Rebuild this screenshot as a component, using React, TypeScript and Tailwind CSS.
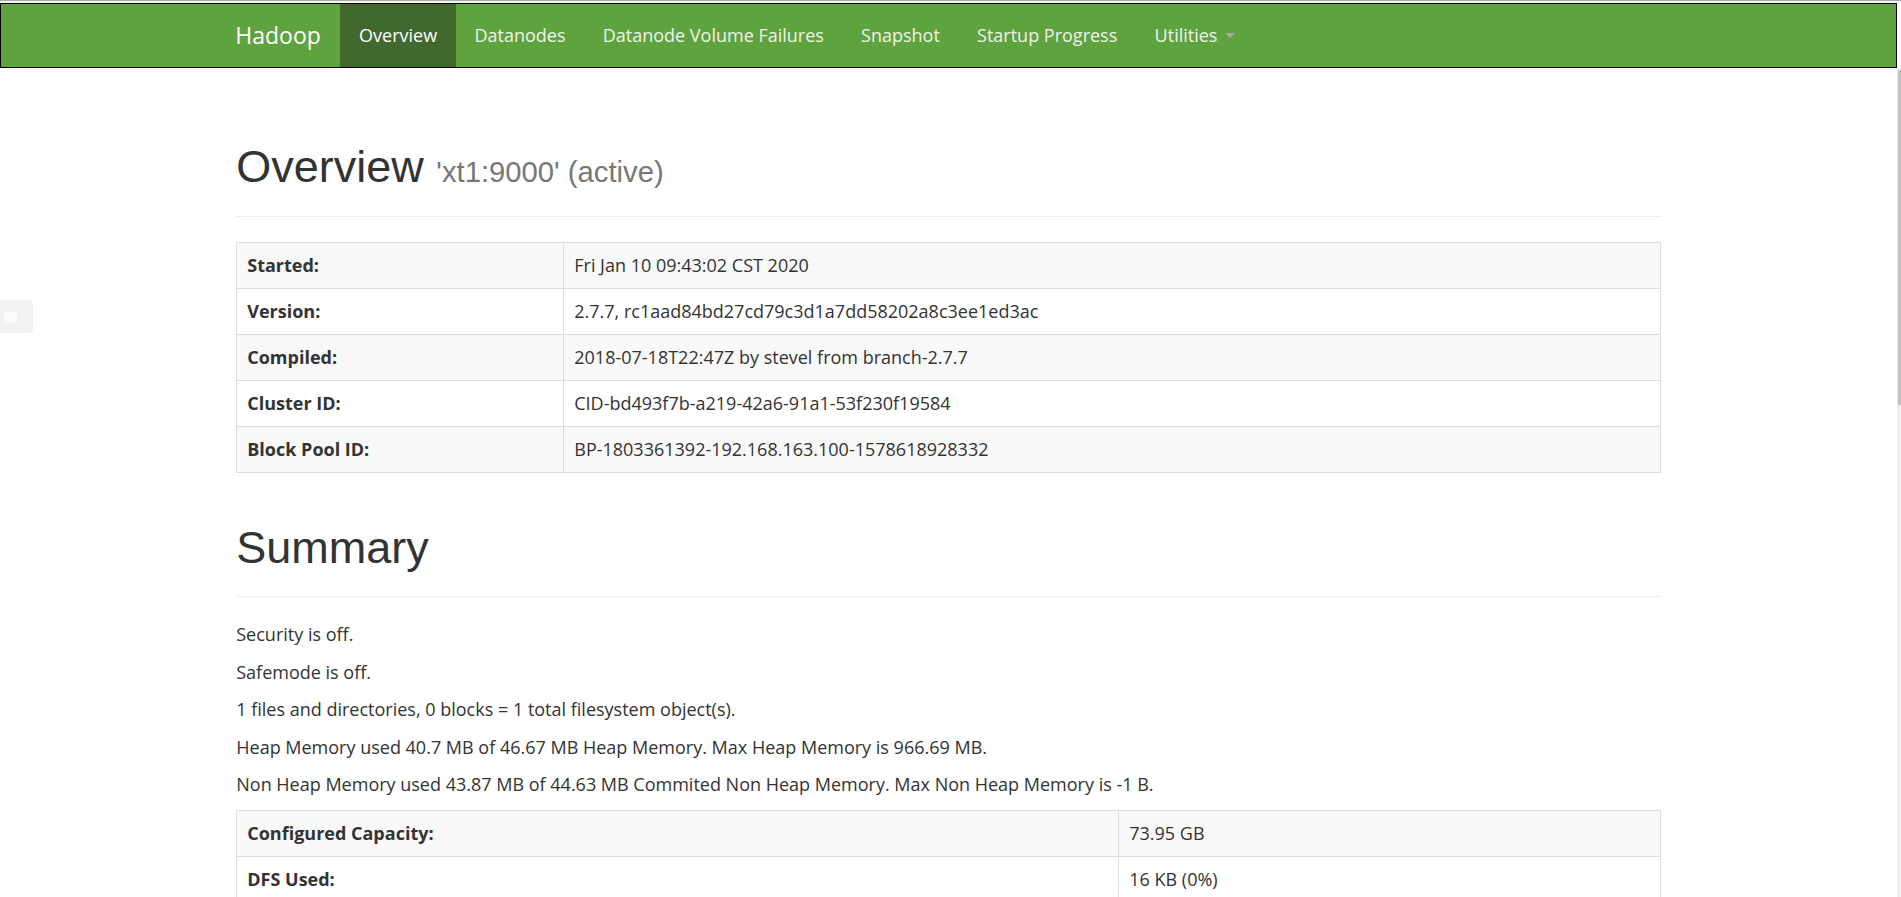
const navItems = ["Overview", "Datanodes", "Datanode Volume Failures", "Snapshot", "Startup Progress"];

const overviewRows = [
  ["Started:", "Fri Jan 10 09:43:02 CST 2020"],
  ["Version:", "2.7.7, rc1aad84bd27cd79c3d1a7dd58202a8c3ee1ed3ac"],
  ["Compiled:", "2018-07-18T22:47Z by stevel from branch-2.7.7"],
  ["Cluster ID:", "CID-bd493f7b-a219-42a6-91a1-53f230f19584"],
  ["Block Pool ID:", "BP-1803361392-192.168.163.100-1578618928332"],
];

const capacityRows = [
  ["Configured Capacity:", "73.95 GB"],
  ["DFS Used:", "16 KB (0%)"],
  ["Non DFS Used:", "11.28 GB"],
  ["DFS Remaining:", "62.67 GB (84.74%)"],
  ["Block Pool Used:", "16 KB (0%)"],
];

const summaryLines = [
  "Security is off.",
  "Safemode is off.",
  "1 files and directories, 0 blocks = 1 total filesystem object(s).",
  "Heap Memory used 40.7 MB of 46.67 MB Heap Memory. Max Heap Memory is 966.69 MB.",
  "Non Heap Memory used 43.87 MB of 44.63 MB Commited Non Heap Memory. Max Non Heap Memory is -1 B.",
];

function InfoTable({ rows, labelWidth }: { rows: string[][]; labelWidth: string }) {
  return (
    <table className="w-full table-fixed border-collapse border border-[#ddd]">
      <colgroup>
        <col className={labelWidth} />
        <col />
      </colgroup>
      <tbody>
        {rows.map(([label, value], i) => (
          <tr key={label} className={i % 2 === 0 ? "bg-[#f9f9f9]" : "bg-white"}>
            <th className="border border-[#ddd] p-[10px] text-left font-bold align-top">{label}</th>
            <td className="border border-[#ddd] p-[10px] align-top">{value}</td>
          </tr>
        ))}
      </tbody>
    </table>
  );
}

export default function App() {
  return (
    <div className="relative h-[897px] overflow-hidden bg-white text-[#333] font-['Open_Sans',sans-serif] text-[18px] leading-[25px]">
      {/* window edge above the navbar */}
      <div className="h-[3px] w-[1901px] border-t border-[#a8a8a8] bg-[#f4f4f4]" />

      {/* navbar */}
      <nav className="h-[65px] w-[1897px] border border-black bg-[#5fa33e]">
        <div className="mx-auto flex h-full w-[1462px] -translate-x-[1px] px-[18.75px]">
          <a className="-ml-[18.75px] flex h-full items-center pl-[18.75px] pr-[19.5px] text-[23px] text-white">Hadoop</a>
          {navItems.map((item, i) => (
            <a
              key={item}
              className={
                i === 0
                  ? "flex h-full items-center bg-[#41692f] px-[18.75px] text-white"
                  : "flex h-full items-center px-[18.6px] text-[#eef3ea]"
              }
            >
              {item}
            </a>
          ))}
          <a className="flex h-full items-center px-[18.75px] text-[#eef3ea]">
            Utilities&nbsp;
            <span className="ml-[2.5px] inline-block h-0 w-0 border-x-[5px] border-t-[5px] border-x-transparent border-t-[#a3aa9f]" />
          </a>
        </div>
      </nav>

      <div className="w-[1897px]">
        <div className="mx-auto w-[1462px] px-[18.75px]">
          {/* overview */}
          <h1 className="mt-[74px] mb-[25px] border-b border-[#eee] pb-[24px] font-['Liberation_Sans',Arial,sans-serif] text-[45px] leading-[49.5px]">
            Overview <small className="text-[29.25px] leading-none text-[#777]">'xt1:9000' (active)</small>
          </h1>
          <InfoTable rows={overviewRows} labelWidth="w-[327px]" />

          {/* summary */}
          <h1 className="mt-[50px] mb-[25px] border-b border-[#eee] pb-[24px] font-['Liberation_Sans',Arial,sans-serif] text-[45px] leading-[49.5px]">
            Summary
          </h1>
          {summaryLines.map((line) => (
            <p key={line} className="mb-[12.5px]">
              {line}
            </p>
          ))}
          <InfoTable rows={capacityRows} labelWidth="w-[882px]" />
        </div>
      </div>

      {/* browser scrollbar */}
      <div className="absolute right-0 top-[68px] bottom-0 w-[4px] bg-[#f0f0f0]">
        <div className="absolute right-0 top-[2px] h-[335px] w-[3px] bg-[#c2c2c2]" />
      </div>

      {/* floating extension handle on the left edge */}
      <div className="absolute left-0 top-[300px] h-[33px] w-[33px] rounded-r-[4px] bg-[#f2f2f2]">
        <div className="absolute left-[4px] top-[12px] h-[11px] w-[13px] rounded-[1px] bg-[#fbfbfb]" />
      </div>
    </div>
  );
}
